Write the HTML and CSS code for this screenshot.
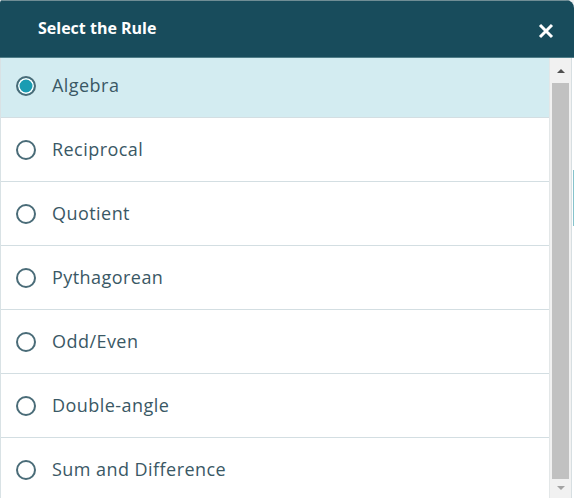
FILE: index.html
```html
<!DOCTYPE html>
<html lang="en">
<head>
<meta charset="utf-8">
<title>Select the Rule</title>
<link rel="stylesheet" href="styles.css">
</head>
<body>
<div class="modal">
  <div class="header">
    <div class="title">Select the Rule</div>
    <button class="close" aria-label="Close">
      <svg width="16" height="16" viewBox="0 0 16 16"><path d="M2 2 L14 14 M14 2 L2 14" stroke="#ffffff" stroke-width="3" stroke-linecap="butt" fill="none"/></svg>
    </button>
  </div>
  <div class="body">
    <div class="list">
      <div class="items">
        <div class="item selected"><span class="radio checked"></span><span class="label">Algebra</span></div>
        <div class="item"><span class="radio"></span><span class="label">Reciprocal</span></div>
        <div class="item"><span class="radio"></span><span class="label">Quotient</span></div>
        <div class="item"><span class="radio"></span><span class="label">Pythagorean</span></div>
        <div class="item"><span class="radio"></span><span class="label">Odd/Even</span></div>
        <div class="item"><span class="radio"></span><span class="label">Double-angle</span></div>
        <div class="item"><span class="radio"></span><span class="label">Sum and Difference</span></div>
      </div>
    </div>
    <div class="scrollbar">
      <div class="arrow-box up"><span class="tri-up"></span></div>
      <div class="thumb"></div>
      <div class="arrow-box down"><span class="tri-down"></span></div>
    </div>
    <div class="edge">
      <div class="edge-gap"></div>
      <div class="edge-mark"></div>
    </div>
  </div>
</div>
</body>
</html>
```
FILE: styles.css
```css
html, body {
  margin: 0;
  padding: 0;
  background: #eef1f2;
}
body {
  font-family: "Open Sans", Lato, Arial, sans-serif;
}
.modal {
  width: 574px;
  height: 498px;
  display: flex;
  flex-direction: column;
  overflow: hidden;
  border-radius: 3px 8px 0 0;
  background: #ffffff;
}
.header {
  height: 57px;
  flex: 0 0 57px;
  background: #184c5c;
  border-bottom: 1px solid #4f7e89;
  display: flex;
  align-items: center;
  justify-content: space-between;
  padding: 0 20px 0 38px;
  box-shadow: inset 0 1px 0 #6f8d95;
}
.title {
  color: #ffffff;
  font-weight: 700;
  font-size: 16px;
  letter-spacing: 0;
  margin-top: -1px;
}
.close {
  background: none;
  border: 0;
  padding: 0;
  width: 16px;
  height: 16px;
  margin-top: 4px;
  display: flex;
  cursor: pointer;
}
.body {
  flex: 1;
  display: flex;
  min-height: 0;
}
.list {
  flex: 1;
  overflow: hidden;
  border-left: 1px solid #d9e2e5;
}
.items {
  margin-top: -4px;
}
.item {
  height: 63px;
  border-bottom: 1px solid #d3dee2;
  display: flex;
  align-items: center;
  padding-left: 15px;
  color: #3a5865;
  font-size: 18px;
  letter-spacing: 0.45px;
}
.item.selected {
  background: #d3ecf1;
}
.radio {
  box-sizing: border-box;
  width: 20px;
  height: 20px;
  border: 2.8px solid #4a6c78;
  border-radius: 50%;
  margin-right: 16px;
  background: transparent;
  flex: 0 0 20px;
}
.radio.checked {
  background: #1a9cb2;
  box-shadow: inset 0 0 0 1.5px #ffffff;
}
.label {
  line-height: 20px;
  margin-top: -2px;
}
.scrollbar {
  width: 21px;
  border-left: 1px solid #e3e7e8;
  background: #f1f1f1;
  display: flex;
  flex-direction: column;
}
.arrow-box {
  display: flex;
  align-items: center;
  justify-content: center;
}
.arrow-box.up {
  height: 25px;
}
.arrow-box.down {
  height: 18px;
}
.tri-up {
  width: 0;
  height: 0;
  border-left: 4px solid transparent;
  border-right: 4px solid transparent;
  border-bottom: 4px solid #505050;
  margin-left: 1px;
}
.tri-down {
  width: 0;
  height: 0;
  border-left: 4px solid transparent;
  border-right: 4px solid transparent;
  border-top: 4px solid #a3a3a3;
  margin-left: 1px;
}
.thumb {
  height: 396px;
  margin-left: 2px;
  width: 17px;
  background: #c1c1c1;
}
.edge {
  width: 2px;
  border-left: 1px solid #d7dfe2;
  background: #ffffff;
  display: flex;
  flex-direction: column;
}
.edge-gap {
  height: 112px;
}
.edge-mark {
  height: 56px;
  border-right: 1px solid #86c3cc;
}
```
